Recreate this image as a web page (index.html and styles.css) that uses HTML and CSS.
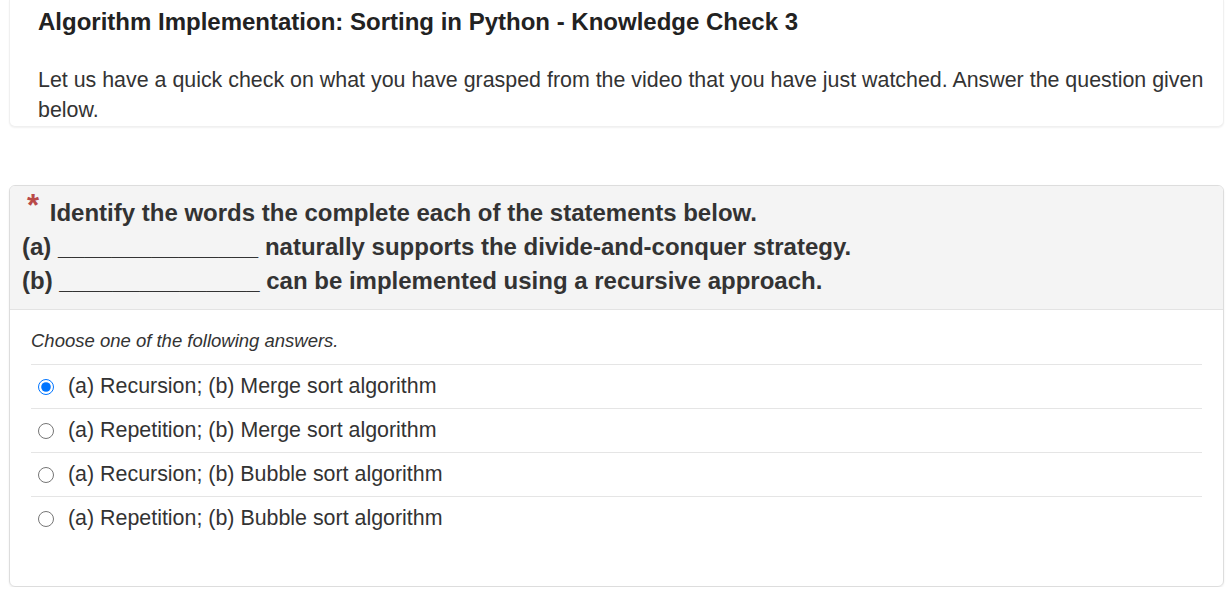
FILE: index.html
```html
<!DOCTYPE html>
<html lang="en">
<head>
  <meta charset="UTF-8" />
  <meta name="viewport" content="width=device-width, initial-scale=1.0" />
  <title>Knowledge Check 3</title>
  <link rel="stylesheet" href="styles.css">
</head>
<body>
  <main class="page">
    <!-- Intro card -->
    <section class="intro-card">
      <h1 class="intro-title">Algorithm Implementation: Sorting in Python - Knowledge Check 3</h1>
      <p class="intro-text">Let us have a quick check on what you have grasped from the video that you have just watched. Answer the question given below.</p>
    </section>

    <!-- Question card -->
    <section class="question-card">
      <div class="question-head">
        <p><span class="required">*</span> Identify the words the complete each of the statements below.</p>
        <p>(a) _______________ naturally supports the divide-and-conquer strategy.</p>
        <p>(b) _______________ can be implemented using a recursive approach.</p>
      </div>
      <div class="question-body">
        <p class="hint">Choose one of the following answers.</p>
        <ul class="answers">
          <li><label><input type="radio" name="answer" checked /> (a) Recursion; (b) Merge sort algorithm</label></li>
          <li><label><input type="radio" name="answer" /> (a) Repetition; (b) Merge sort algorithm</label></li>
          <li><label><input type="radio" name="answer" /> (a) Recursion; (b) Bubble sort algorithm</label></li>
          <li><label><input type="radio" name="answer" /> (a) Repetition; (b) Bubble sort algorithm</label></li>
        </ul>
      </div>
    </section>
  </main>
</body>
</html>
```

FILE: styles.css
```css
/* General Styles */
body {
  font-family: "Liberation Sans", Arial, sans-serif;
  margin: 0;
  padding: 0;
  background-color: #fff;
  color: #333;
}

.page {
  padding: 0 7px 0 9px;
}

/* Intro Card */
.intro-card {
  background: white;
  border: 1px solid #f0f0f0;
  border-top: none;
  border-radius: 0 0 6px 6px;
  box-shadow: 0 1px 2px rgba(0, 0, 0, 0.06);
  padding: 7px 8px 1px 28px;
}

.intro-title {
  font-size: 24px;
  margin: 0 0 28px;
  line-height: 30px;
  color: #222;
}

.intro-text {
  font-size: 21.4px;
  line-height: 30px;
  margin: 0;
}

/* Question Card */
.question-card {
  margin-top: 58px;
  border: 1px solid #ddd;
  border-radius: 6px;
  box-shadow: 0 1px 2px rgba(0, 0, 0, 0.08);
  overflow: hidden;
}

.question-head {
  background-color: #f4f4f4;
  border-bottom: 1px solid #e3e3e3;
  padding: 10px 16px 11px 12px;
  font-weight: bold;
  font-size: 24px;
  line-height: 34px;
  color: #333;
}

.question-head p {
  margin: 0;
}

.required {
  color: #b94a48;
  font-size: 31px;
  line-height: 0;
  margin: 0 4px 0 5px;
  position: relative;
  top: -5px;
}

.question-body {
  padding: 20px 21px 46px 21px;
}

.hint {
  font-style: italic;
  font-size: 18.5px;
  line-height: 22px;
  margin: 0 0 12px;
  color: #333;
}

.answers {
  list-style: none;
  margin: 0;
  padding: 0;
}

.answers li {
  border-top: 1px solid #e5e5e5;
  height: 43px;
  display: flex;
  align-items: center;
  font-size: 21.4px;
}

.answers label {
  display: flex;
  align-items: center;
  gap: 14px;
}

.answers input {
  margin: 0 0 0 7px;
  width: 16px;
  height: 16px;
}
```
